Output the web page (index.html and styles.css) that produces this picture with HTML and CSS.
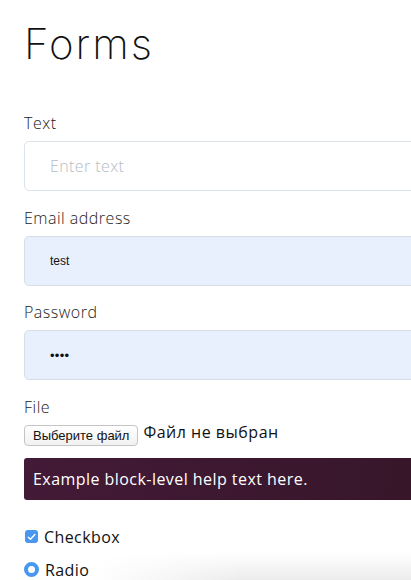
FILE: index.html
```html
<!DOCTYPE html>
<html lang="ru">
<head>
<meta charset="utf-8">
<title>Forms</title>
<link rel="stylesheet" href="styles.css">
</head>
<body>
<main class="page">
  <h1 class="title">Forms</h1>
  <form class="form">
    <div class="group">
      <label class="label" for="t">Text</label>
      <input class="field" id="t" type="text" placeholder="Enter text">
    </div>
    <div class="group">
      <label class="label" for="e">Email address</label>
      <div class="field filled"><span class="auto">test</span></div>
    </div>
    <div class="group">
      <label class="label" for="p">Password</label>
      <div class="field filled"><span class="dots">••••</span></div>
    </div>
    <div class="group">
      <label class="label">File</label>
      <div class="file-row">
        <span class="file-btn">Выберите файл</span>
        <span class="file-name">Файл не выбран</span>
      </div>
    </div>
    <div class="help">Example block-level help text here.</div>
    <div class="check-list">
      <label class="check"><span class="box"><svg width="9" height="8" viewBox="0 0 9 8"><path d="M1.3 4.2 L3.5 6.3 L7.8 1.5" fill="none" stroke="#fff" stroke-width="1.4" stroke-linecap="round" stroke-linejoin="round"/></svg></span>Checkbox</label>
      <label class="check"><span class="radio"></span>Radio</label>
    </div>
  </form>
</main>
<div class="shade"></div>
</body>
</html>
```
FILE: styles.css
```css
html, body {
  margin: 0;
  padding: 0;
  background: #fff;
  overflow: hidden;
}
body {
  font-family: "Open Sans", "Liberation Sans", sans-serif;
  color: #1a1a1a;
  width: 411px;
  height: 580px;
}
.page {
  padding: 14px 0 0 24px;
  width: 560px;
}
.title {
  margin: 0 0 37px 0;
  font-family: "Inter", "Open Sans", sans-serif;
  font-weight: 200;
  font-size: 42px;
  line-height: 60px;
  letter-spacing: 2px;
  color: #111;
}
.form {
  display: flex;
  flex-direction: column;
}
.group {
  display: flex;
  flex-direction: column;
  margin-bottom: 14.5px;
}
.label {
  font-size: 16px;
  font-weight: 300;
  line-height: 24px;
  margin-bottom: 6px;
  color: #222;
  letter-spacing: 0.5px;
}
.field {
  box-sizing: border-box;
  height: 50px;
  width: 520px;
  border: 1px solid #dde3ea;
  border-radius: 5px;
  padding: 0 25px;
  font-family: "Open Sans", sans-serif;
  font-size: 16px;
  letter-spacing: 0.4px;
  font-weight: 300;
  background: #fff;
  outline: none;
  display: flex;
  align-items: center;
}
.field::placeholder {
  color: #b4bcc3;
}
.filled {
  background: #e8f0fe;
  border-color: #d6dde6;
}
.auto {
  font-family: "Liberation Sans", Arial, sans-serif;
  font-size: 12px;
  letter-spacing: 0;
  color: #111;
}
.dots {
  font-family: "Liberation Sans", Arial, sans-serif;
  font-size: 13px;
  letter-spacing: 0.3px;
  color: #111;
}
.file-row {
  display: flex;
  align-items: center;
  gap: 5px;
}
.file-btn {
  box-sizing: border-box;
  height: 21px;
  padding: 0 8px;
  border: 1px solid #c5c5c5;
  border-radius: 4px;
  background: linear-gradient(#ffffff, #f1f1f1);
  font-family: "Liberation Sans", Arial, sans-serif;
  font-size: 13px;
  line-height: 19px;
  color: #111;
}
.file-name {
  font-size: 16px;
  letter-spacing: 0.5px;
  color: #111;
  margin-top: -6px;
}
.help {
  box-sizing: border-box;
  margin-top: -2.5px;
  width: 520px;
  height: 42px;
  padding: 0 9px;
  display: flex;
  align-items: center;
  border-radius: 3px;
  background: linear-gradient(100deg, #431a37 0%, #331526 100%);
  color: #fff;
  font-size: 16px;
  letter-spacing: 0.45px;
  font-weight: 400;
}
.check-list {
  display: flex;
  flex-direction: column;
  gap: 9px;
  margin-top: 25px;
}
.check {
  display: flex;
  align-items: center;
  gap: 6px;
  font-size: 16px;
  letter-spacing: 0.4px;
  line-height: 24px;
  color: #111;
}
.box {
  width: 13px;
  height: 13px;
  border-radius: 3px;
  background: #4a97f0;
  display: flex;
  align-items: center;
  justify-content: center;
  margin-left: 1px;
}
.radio {
  box-sizing: border-box;
  width: 15px;
  height: 15px;
  border-radius: 50%;
  background: #fff;
  border: 4.5px solid #4a97f0;
}
.shade {
  position: fixed;
  left: 0;
  right: 0;
  bottom: 0;
  height: 28px;
  pointer-events: none;
  background: linear-gradient(to bottom, rgba(0,0,0,0), rgba(0,0,0,0.075));
  -webkit-mask-image: linear-gradient(to right, transparent 90px, #000 240px);
  mask-image: linear-gradient(to right, transparent 90px, #000 240px);
}
```
